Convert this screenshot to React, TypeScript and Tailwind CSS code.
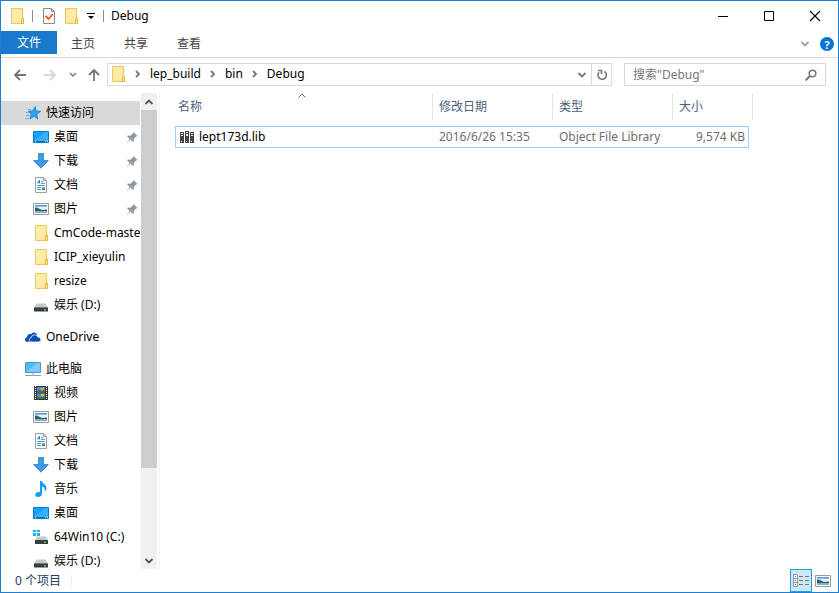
import type { ReactNode } from "react";

type IconProps = { className?: string };

function Svg({ children, className = "" }: { children: ReactNode; className?: string }) {
  return (
    <svg viewBox="0 0 16 16" className={`size-4 shrink-0 ${className}`} fill="none" aria-hidden="true">
      {children}
    </svg>
  );
}

function FolderIcon({ className }: IconProps) {
  return (
    <Svg className={className}>
      <path d="M2.500 .5h11v10l1 1v4h-12z" fill="#ffe69a" stroke="#ebc95f" />
      <path d="M3 1h10v9L6 15H3z" fill="#ffeaa6" />
      <path d="M12.500 15.500v-4l1-1.500h1v5.500z" fill="#ffe17c" stroke="#e3bb46" />
    </Svg>
  );
}

function CheckPageIcon() {
  return (
    <Svg>
      <path d="M2.500 .5h8l3 3v12h-11z" fill="#f8f8f8" stroke="#8a8a8a" />
      <path d="M10.500 .5v3h3" stroke="#8a8a8a" />
      <path d="M4.500 8l3 3 4.500-5" stroke="#f05a28" strokeWidth="1.800" />
    </Svg>
  );
}

function StarIcon() {
  return (
    <Svg>
      <path d="M10.200 1.500l.8 4.300 4.600.6-3.700 2.700.8 5-3.600-2.800-4.200 2.700 1.400-4.700-3-3 4.200-.5z" fill="#2ba3f5" stroke="#1b7fc9" strokeWidth=".8" />
      <path d="M3 4.500h3M1 7.500h3M1 10.500h4M0 13.500h4" stroke="#69afd9" />
    </Svg>
  );
}

function DesktopIcon() {
  return (
    <Svg>
      <path d="M.5 2.500h15v11H.5z" fill="#14a1ff" stroke="#087bc5" />
      <path d="M1 12L12 3h3v9z" fill="#39b0ff" />
      <path d="M1 12.500h14" stroke="#0568ac" />
      <path d="M2 12.500h1m9 0h1m1 0h1" stroke="#fff" />
    </Svg>
  );
}

function DownloadIcon() {
  return (
    <Svg>
      <path d="M5.500 .5h5v7h4.800L8 15.200.7 7.500h4.800z" fill="#3e9ae8" stroke="#2580cc" strokeWidth=".8" />
    </Svg>
  );
}

function DocumentIcon() {
  return (
    <Svg>
      <path d="M2.500 .5h8l3 3v12h-11z" fill="#fff" stroke="#9a9fa3" />
      <path d="M10.500 .5v3h3" stroke="#9a9fa3" />
      <path d="M4.300 6.500L6.500 3v3.500M5 5.500h2" stroke="#2b8fd6" />
      <path d="M8 4.500h2M8 6.500h4M4 8.500h8M4 10.500h4M4 12.500h4" stroke="#4aa2dc" />
      <path d="M9 10h3v1.500H9z" fill="#5baee0" />
      <path d="M9 11.500h3V13H9z" fill="#2f6b78" />
    </Svg>
  );
}

function PictureIcon() {
  return (
    <Svg>
      <path d="M.5 2.500h15v11H.5z" fill="#fff" stroke="#9b9b9b" />
      <path d="M2 4h12v8H2z" fill="#b7d9f4" />
      <path d="M2 4h12v1.500H2z" fill="#5a9be0" />
      <path d="M5 6.500c2-1 4-.8 5-.5h4v3H7z" fill="#e8f4fd" />
      <path d="M2 6.500c3 .3 5 1.800 7 2.500l5-.5V10H2z" fill="#35605f" />
      <path d="M2 10h12v2H2z" fill="#7fb0d6" />
    </Svg>
  );
}

function DriveIcon() {
  return (
    <Svg>
      <path d="M3.500 6.500h9L15 11H1z" fill="#c7c9cb" />
      <path d="M1 10.500h14v4H1z" fill="#3b3e40" />
      <path d="M1 10.500h14" stroke="#77797b" />
      <path d="M11 12h2v1.500h-2z" fill="#27e13c" />
    </Svg>
  );
}

function SystemDriveIcon() {
  return (
    <Svg>
      <path d="M4 7.500h9l2 4H2z" fill="#c7c9cb" />
      <path d="M2 11h13v4H2z" fill="#3b3e40" />
      <path d="M11 12.500h2V14h-2z" fill="#27e13c" />
      <path d="M0 1h3v2H0zM4 1h3v2H4zM0 4h3v3H0zM4 4h3v3H4z" fill="#09b4ee" />
    </Svg>
  );
}

function CloudIcon() {
  return (
    <Svg>
      <path d="M5 12.800H2C-.8 12.500-.4 8.500 2 8.300 2.200 5.500 4.500 4.500 6 5.300c1.800-2.800 5.300-2.300 6.300.7" fill="#0b4db5" />
      <path d="M6.500 13C3.500 13 3.600 9.200 6.200 8.800c.3-3.300 5.500-4.100 6.600-.8 3.700 0 4 4.600 1 5z" fill="#0b4db5" stroke="#fff" strokeWidth=".8" />
    </Svg>
  );
}

function ComputerIcon() {
  return (
    <Svg>
      <path d="M.5 1.500h15v10H.5z" fill="#4fbafa" stroke="#5894b9" />
      <path d="M1 11L12 2h3v9z" fill="#78cdfc" />
      <path d="M6.500 12h3v2h-3z" fill="#c9d8e2" />
      <path d="M0 14.500h16" stroke="#86a5bb" />
    </Svg>
  );
}

function VideoIcon() {
  return (
    <Svg>
      <path d="M1 1h14v14H1z" fill="#383838" />
      <path d="M2.500 1v14M13.500 1v14" stroke="#fff" strokeDasharray="1 1" />
      <path d="M4 2h8v5.500H4zM4 8.500h8V14H4z" fill="#4c8de0" />
      <path d="M4 6l3-1 2 1 3-1v2.500H4zM4 12.500l3-1 2 1 3-1V14H4z" fill="#3c743a" />
      <path d="M8 3h3v2H8zM8 9h3v2H8z" fill="#f3bc28" />
      <path d="M10 4h2v2h-2zM7 5h2v1H7z" fill="#db5142" />
    </Svg>
  );
}

function MusicIcon() {
  return (
    <Svg>
      <path d="M7 0h2c.3 2.800 4.500 3.400 4.500 7 0 2-1 3-2 3.500.8-2.500-.2-4.500-2.500-5V13c0 2-2 3-4.300 3C1.500 15.800 1.300 12 4.500 11.200c1-.3 1.800-.2 2.500 0z" fill="#12a0ed" />
    </Svg>
  );
}

function LibraryFileIcon() {
  return (
    <Svg>
      <path d="M1 3h4v11H1zM6 2h4v12H6zM11 3h4v11h-4z" fill="#404347" />
      <path d="M2 4h2v1H2zM2 6h2v1H2zM7 3h2v1H7zM7 5h2v2H7zM12 4h2v1h-2zM12 6h2v1h-2z" fill="#f4f4f4" />
      <path d="M2 12h1v1H2zM7 12h1v1H7zM12 12h1v1h-1z" fill="#fff" />
    </Svg>
  );
}

function PinIcon() {
  return (
    <Svg className="text-[#8e9ba5]">
      <path d="M9.500 3l4 4-1.500.7-2.200 2.100.2 2.700-1 .5-2.600-2.500L2.500 14l3-4L3 7.300 3.700 6.500l2.600.2 2.500-2.200z" fill="currentColor" />
    </Svg>
  );
}

function Chevron({ direction, className = "" }: { direction: "up" | "down" | "right"; className?: string }) {
  const paths = { up: "M1.500 6L5 2.500 8.500 6", down: "M1.500 2L5 5.500 8.500 2", right: "M3 1l3 3-3 3" };
  return (
    <svg viewBox="0 0 10 8" className={`h-2 w-2.5 shrink-0 ${className}`} fill="none" aria-hidden="true">
      <path d={paths[direction]} stroke="currentColor" strokeWidth="1.800" />
    </svg>
  );
}

function Arrow({ className = "", d }: { className?: string; d: string }) {
  return (
    <svg viewBox="0 0 14 14" className={`size-3.5 ${className}`} fill="none" aria-hidden="true">
      <path d={d} stroke="currentColor" strokeWidth="1.800" />
    </svg>
  );
}

type Entry = { label: string; icon: () => ReactNode; pinned?: boolean };
type Group = Entry & { selected?: boolean; items: Entry[] };

const groups: Group[] = [
  {
    label: "快速访问",
    icon: StarIcon,
    selected: true,
    items: [
      { label: "桌面", icon: DesktopIcon, pinned: true },
      { label: "下载", icon: DownloadIcon, pinned: true },
      { label: "文档", icon: DocumentIcon, pinned: true },
      { label: "图片", icon: PictureIcon, pinned: true },
      { label: "CmCode-master", icon: () => <FolderIcon /> },
      { label: "ICIP_xieyulin", icon: () => <FolderIcon /> },
      { label: "resize", icon: () => <FolderIcon /> },
      { label: "娱乐 (D:)", icon: DriveIcon },
    ],
  },
  { label: "OneDrive", icon: CloudIcon, items: [] },
  {
    label: "此电脑",
    icon: ComputerIcon,
    items: [
      { label: "视频", icon: VideoIcon },
      { label: "图片", icon: PictureIcon },
      { label: "文档", icon: DocumentIcon },
      { label: "下载", icon: DownloadIcon },
      { label: "音乐", icon: MusicIcon },
      { label: "桌面", icon: DesktopIcon },
      { label: "64Win10 (C:)", icon: SystemDriveIcon },
      { label: "娱乐 (D:)", icon: DriveIcon },
    ],
  },
];

function TitleBar() {
  return (
    <header className="flex h-[30px] shrink-0 items-center pb-px pl-2 pr-[17px]">
      <FolderIcon />
      <span className="ml-[7px] h-3 w-px bg-[#8c8c8c]" />
      <button aria-label="属性" className="ml-2"><CheckPageIcon /></button>
      <button aria-label="新建文件夹" className="ml-1.5"><FolderIcon /></button>
      <button aria-label="自定义快速访问工具栏" className="ml-2">
        <svg viewBox="0 0 8 8" className="size-2" aria-hidden="true">
          <path d="M0 1h8v1H0zM1 4h6L4 7z" fill="#000" />
        </svg>
      </button>
      <span className="ml-2 h-3 w-px bg-[#8c8c8c]" />
      <h1 className="ml-[7px]">Debug</h1>
      <div className="ml-auto flex gap-[34px]">
        <button aria-label="最小化">
          <svg viewBox="0 0 12 12" className="size-3" aria-hidden="true"><path d="M1 6h10v1H1z" fill="#000" /></svg>
        </button>
        <button aria-label="最大化">
          <svg viewBox="0 0 12 12" className="size-3" fill="none" aria-hidden="true"><path d="M1.500 1.500h9v9h-9z" stroke="#000" /></svg>
        </button>
        <button aria-label="关闭">
          <svg viewBox="0 0 12 12" className="size-3" fill="none" aria-hidden="true"><path d="M1 1l10 10M11 1L1 11" stroke="#000" strokeWidth="1.200" /></svg>
        </button>
      </div>
    </header>
  );
}

function RibbonTabs() {
  return (
    <nav className="flex h-[27px] shrink-0 items-start border-b border-[#dadbdc] pr-1 text-[#444]">
      <button className="h-[23px] bg-[#1979ca] px-4 text-white">文件</button>
      <div className="flex gap-px">
        {["主页", "共享", "查看"].map((tab) => (
          <button key={tab} className="h-[25px] px-3.5">{tab}</button>
        ))}
      </div>
      <button aria-label="展开功能区" className="ml-auto flex h-[26px] items-center text-[#a0a0a0]"><Chevron direction="down" /></button>
      <button aria-label="帮助" className="ml-2.5 mt-1.5 flex size-3.5 items-center justify-center rounded-full bg-[#0873d1] text-[11px] font-bold leading-none text-white">?</button>
    </nav>
  );
}

function AddressBar() {
  return (
    <div className="flex h-[35px] shrink-0 items-center pb-0.5 pl-3 pr-3">
      <button aria-label="后退" className="text-[#747474]"><Arrow d="M13 7H2M7 2L2 7l5 5" /></button>
      <button aria-label="前进" className="ml-4 text-[#d8d8d8]"><Arrow d="M1 7h11M7 2l5 5-5 5" /></button>
      <button aria-label="最近浏览的位置" className="ml-3 text-[#858585]">
        <svg viewBox="0 0 8 8" className="size-2" fill="none" aria-hidden="true"><path d="M1 2l3 3 3-3" stroke="currentColor" strokeWidth="1.600" /></svg>
      </button>
      <button aria-label="上移" className="ml-2.5 text-[#747474]"><Arrow d="M7 13V2M2 7l5-5 5 5" /></button>
      <div className="ml-1.5 flex h-[23px] min-w-0 flex-1 border border-[#d9d9d9]">
        <ol className="flex min-w-0 flex-1 items-center pb-px pl-0.5">
          <li className="pb-px"><FolderIcon /></li>
          {["lep_build", "bin", "Debug"].map((part) => (
            <li key={part} className="flex items-center">
              <Chevron direction="right" className="mx-[7px] text-[#777]" />
              <button>{part}</button>
            </li>
          ))}
        </ol>
        <button aria-label="以前的位置" className="px-1 text-[#777]"><Chevron direction="down" /></button>
        <button aria-label="刷新" className="flex w-5 items-center justify-center border-l border-[#d9d9d9] text-[#777]">
          <svg viewBox="0 0 12 12" className="size-3" fill="none" aria-hidden="true">
            <path d="M8.500 2.500A4.200 4.200 0 1 1 3 3.300" stroke="currentColor" strokeWidth="1.600" />
            <path d="M2 1.500h3.500V5" stroke="currentColor" strokeWidth="1.600" />
          </svg>
        </button>
      </div>
      <label className="ml-3 flex h-[23px] w-[202px] items-center border border-[#d9d9d9] pl-2 pr-2 text-[#777]">
        <input aria-label="搜索" placeholder='搜索"Debug"' className="min-w-0 flex-1 bg-transparent outline-none placeholder:text-[#777]" />
        <svg viewBox="0 0 12 12" className="size-3" fill="none" aria-hidden="true">
          <circle cx="7.500" cy="4.500" r="3.300" stroke="currentColor" strokeWidth="1.600" />
          <path d="M5 7l-4.300 4.300" stroke="currentColor" strokeWidth="2" />
        </svg>
      </label>
    </div>
  );
}

function NavRow({ entry, nested, selected }: { entry: Entry; nested?: boolean; selected?: boolean }) {
  const Icon = entry.icon;
  return (
    <button className={`flex h-6 w-full items-center gap-[5px] overflow-hidden text-left ${nested ? "pl-8" : "pl-6"} ${selected ? "bg-[#d9d9d9]" : ""}`}>
      <Icon />
      <span className="flex-1 whitespace-nowrap">{entry.label}</span>
      {entry.pinned && <PinIcon />}
    </button>
  );
}

function NavigationPane() {
  return (
    <aside className="flex w-[159px] shrink-0 border-r border-[#f3f3f3]">
      <nav className="flex min-w-0 flex-1 flex-col gap-2 overflow-hidden pr-px pt-2">
        {groups.map((group) => (
          <ul key={group.label}>
            <li><NavRow entry={group} selected={group.selected} /></li>
            {group.items.map((item) => (
              <li key={item.label}><NavRow entry={item} nested /></li>
            ))}
          </ul>
        ))}
      </nav>
      <div className="mr-0.5 flex w-4 flex-col bg-[#f0f0f0] text-[#555]">
        <button aria-label="向上滚动" className="flex h-[17px] shrink-0 items-center justify-center"><Chevron direction="up" /></button>
        <div className="flex flex-1 flex-col">
          <div className="h-[81%] bg-[#cdcdcd]" />
        </div>
        <button aria-label="向下滚动" className="flex h-[17px] shrink-0 items-center justify-center"><Chevron direction="down" /></button>
      </div>
    </aside>
  );
}

function FileList() {
  return (
    <main className="min-w-0 flex-1 overflow-hidden pl-[15px]">
      <table className="block">
        <thead className="block">
          <tr className="flex h-[27px] text-left text-[#4c607a]">
            <th className="relative flex w-[258px] items-center border-r border-[#e5e5e5] pl-[3px] font-normal">
              名称
              <svg viewBox="0 0 8 5" className="absolute left-[123px] top-0 h-[5px] w-2" fill="none" aria-hidden="true">
                <path d="M.5 4.500L4 1l3.500 3.500" stroke="#666" />
              </svg>
            </th>
            <th className="flex w-[120px] items-center border-r border-[#e5e5e5] pl-1.5 font-normal">修改日期</th>
            <th className="flex w-[120px] items-center border-r border-[#e5e5e5] pl-1.5 font-normal">类型</th>
            <th className="flex w-20 items-center border-r border-[#e5e5e5] pl-1.5 font-normal">大小</th>
          </tr>
        </thead>
        <tbody className="block pt-1.5">
          <tr className="flex h-[22px] w-[574px] items-center border border-[#99d1ff] text-[#6d6d6d]">
            <td className="flex w-[257px] items-center gap-1 pl-[3px] text-black"><LibraryFileIcon />lept173d.lib</td>
            <td className="w-[120px] pl-1.5">2016/6/26 15:35</td>
            <td className="w-[120px] whitespace-nowrap pl-1.5">Object File Library</td>
            <td className="flex-1 whitespace-nowrap pr-[3px] text-right">9,574 KB</td>
          </tr>
        </tbody>
      </table>
    </main>
  );
}

function StatusBar() {
  return (
    <footer className="flex h-[23px] shrink-0 items-center pl-3.5 pr-1 text-[#27405f]">
      <span>0 个项目</span>
      <span className="ml-2.5 h-3 w-px bg-[#eeeeee]" />
      <button aria-label="详细信息" aria-pressed="true" className="ml-auto flex h-[23px] w-[22px] items-center justify-center border border-[#26a0da] bg-[#cce8f5]">
        <svg viewBox="0 0 16 14" className="h-3.5 w-4" fill="none" aria-hidden="true">
          <path d="M.5.5h4v4h-4zM.5 4.500h4v4h-4zM.5 8.500h4v4h-4z" fill="#fff" stroke="#999" />
          <path d="M2 2h1v1H2z" fill="#16834c" />
          <path d="M2 6h1v1H2z" fill="#1979ca" />
          <path d="M2 10h1v1H2z" fill="#df3322" />
          <path d="M6 2.500h4M12 2.500h4M6 6.500h4M12 6.500h4M6 10.500h4M12 10.500h4" stroke="#777" />
        </svg>
      </button>
      <button aria-label="大图标" className="flex w-[22px] items-center justify-center"><PictureIcon /></button>
    </footer>
  );
}

export default function App() {
  return (
    <div className="flex h-screen flex-col overflow-hidden border border-[#1a80d3] bg-white font-['Noto_Sans','Noto_Sans_CJK_SC',sans-serif] text-[12px] leading-4 text-black">
      <TitleBar />
      <RibbonTabs />
      <AddressBar />
      <div className="flex min-h-0 flex-1">
        <NavigationPane />
        <FileList />
      </div>
      <StatusBar />
    </div>
  );
}
